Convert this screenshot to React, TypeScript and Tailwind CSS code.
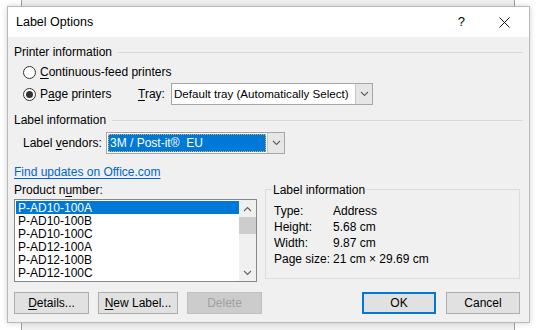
import React from "react";

const font = "font-['Liberation_Sans',Arial,sans-serif]";

function Chevron({ dir = "down" }: { dir?: "down" | "up" }) {
  return (
    <svg width="9" height="6" viewBox="0 0 9 6" className="block">
      {dir === "down" ? (
        <polyline points="1,1 4.5,4.5 8,1" fill="none" stroke="#606060" strokeWidth="1.1" />
      ) : (
        <polyline points="1,5 4.5,1.5 8,5" fill="none" stroke="#606060" strokeWidth="1.1" />
      )}
    </svg>
  );
}

function Radio({ checked }: { checked?: boolean }) {
  return (
    <span className="flex h-[13px] w-[13px] items-center justify-center rounded-full border border-[#333333] bg-white">
      {checked && <span className="h-[7px] w-[7px] rounded-full bg-[#333333]" />}
    </span>
  );
}

function Select({ width, children }: { width: string; children: React.ReactNode }) {
  return (
    <div className={`flex h-[22px] ${width} border border-[#a6a6a6] bg-white`}>
      <div className="flex flex-1 items-center overflow-hidden">{children}</div>
      <div className="flex w-[17px] items-center justify-center border-l border-[#c6c6c6] bg-[#e6e6e6]">
        <Chevron />
      </div>
    </div>
  );
}

function Heading({ children }: { children: React.ReactNode }) {
  return (
    <div className="flex h-[16px] items-center">
      <span className="whitespace-nowrap">{children}</span>
      <div className="ml-[6px] h-px flex-1 bg-[#d9d9d9]" />
    </div>
  );
}

function Button({
  children,
  width,
  disabled,
  primary,
}: {
  children: React.ReactNode;
  width: string;
  disabled?: boolean;
  primary?: boolean;
}) {
  return (
    <div
      className={`flex h-[22px] ${width} items-center justify-center ${
        disabled
          ? "border border-[#bfbfbf] bg-[#cccccc] text-[#a0a0a0]"
          : primary
          ? "border-2 border-[#0078d7] bg-[#e1e1e1]"
          : "border border-[#adadad] bg-[#e1e1e1]"
      }`}
    >
      {children}
    </div>
  );
}

const products = ["P-AD10-100A", "P-AD10-100B", "P-AD10-100C", "P-AD12-100A", "P-AD12-100B", "P-AD12-100C"];

const info = [
  ["Type:", "Address"],
  ["Height:", "5.68 cm"],
  ["Width:", "9.87 cm"],
  ["Page size:", "21 cm × 29.69 cm"],
];

export default function App() {
  return (
    <div className={`relative h-[330px] w-[541px] overflow-hidden bg-white text-[12px] text-black ${font}`}>
      {/* window behind the dialog */}
      <div className="absolute left-[21px] top-[-10px] h-[350px] w-[494px] border-x border-[#a0a0a0] bg-[#f0f0f0]" />

      <div className="relative ml-[7px] mt-[6px] flex h-[317px] w-[523px] flex-col border border-[#b9b9b9] bg-[#f0f0f0] shadow-[0_0_6px_rgba(0,0,0,0.18)]">
        {/* title bar */}
        <div className="flex h-[30px] items-center bg-white pl-[8px]">
          <span className="text-[12.5px]">Label Options</span>
          <span className="ml-auto text-[13px]">?</span>
          <div className="ml-[33px] mr-[19px] flex h-[12px] w-[12px] items-center justify-center">
            <svg width="11" height="11" viewBox="0 0 11 11">
              <path d="M0.5 0.5 L10.5 10.5 M10.5 0.5 L0.5 10.5" stroke="#111" strokeWidth="1" />
            </svg>
          </div>
        </div>

        {/* body */}
        <div className="flex flex-1 flex-col px-[6px] pt-[7px]">
          <Heading>Printer information</Heading>

          <div className="mt-[4px] flex h-[16px] items-center">
            <span className="ml-[9px]">
              <Radio />
            </span>
            <span className="ml-[4px]">
              <span className="underline underline-offset-2">C</span>ontinuous-feed printers
            </span>
          </div>

          <div className="mt-[3px] flex h-[22px] items-center">
            <span className="ml-[9px]">
              <Radio checked />
            </span>
            <span className="ml-[4px] w-[98px]">
              P<span className="underline underline-offset-2">a</span>ge printers
            </span>
            <span className="w-[33px]">
              <span className="underline underline-offset-2">T</span>ray:
            </span>
            <Select width="w-[202px]">
              <span className="pl-[2px] whitespace-nowrap text-[11.6px]">Default tray (Automatically Select)</span>
            </Select>
          </div>

          <div className="mt-[7px]">
            <Heading>Label information</Heading>
          </div>

          <div className="mt-[4px] flex h-[22px] items-center">
            <span className="ml-[9px] w-[83px]">
              Label <span className="underline underline-offset-2">v</span>endors:
            </span>
            <Select width="w-[179px]">
              <div className="m-[1px] flex h-[18px] flex-1 items-center bg-[#0078d7] pl-[2px] text-white outline-1 outline-dotted outline-offset-[-1px] outline-[#e8b060]">
                3M / Post-it®&nbsp;&nbsp;EU
              </div>
            </Select>
          </div>

          <div className="mt-[10px] flex h-[16px] items-center">
            <span className="text-[#0066cc] underline underline-offset-2">Find updates on Office.com</span>
          </div>

          <div className="mt-[2px] flex pr-[3px]">
            {/* product list */}
            <div className="flex w-[243px] flex-col">
              <div className="flex h-[16px] items-center">
                <span>
                  Product n<span className="underline underline-offset-2">u</span>mber:
                </span>
              </div>
              <div className="mt-[1px] flex h-[83px] border border-[#828790] bg-white">
                <div className="flex flex-1 flex-col pl-[1px] pt-[1px]">
                  {products.map((p, i) => (
                    <div
                      key={p}
                      className={`flex h-[13px] items-center pl-[2px] leading-none ${
                        i === 0 ? "bg-[#0078d7] text-white" : ""
                      }`}
                    >
                      {p}
                    </div>
                  ))}
                </div>
                <div className="flex w-[17px] flex-col bg-[#f0f0f0]">
                  <div className="flex h-[17px] items-center justify-center">
                    <Chevron dir="up" />
                  </div>
                  <div className="h-[17px] bg-[#cdcdcd]" />
                  <div className="flex-1" />
                  <div className="flex h-[17px] items-center justify-center">
                    <Chevron />
                  </div>
                </div>
              </div>
            </div>

            {/* label info group */}
            <div className="relative ml-[8px] mt-[7px] h-[90px] flex-1 border border-[#dcdcdc]">
              <span className="absolute left-[6px] top-[-9px] bg-[#f0f0f0] px-[1px]">Label information</span>
              <div className="flex flex-col pl-[8px] pt-[13px]">
                {info.map(([k, v]) => (
                  <div key={k} className="flex h-[16px] items-center">
                    <span className="w-[59px]">{k}</span>
                    <span>{v}</span>
                  </div>
                ))}
              </div>
            </div>
          </div>

          <div className="mt-[10px] flex items-center pr-[3px]">
            <Button width="w-[75px]">
              <span>
                <span className="underline underline-offset-2">D</span>etails...
              </span>
            </Button>
            <div className="ml-[9px]">
              <Button width="w-[80px]">
                <span>
                  <span className="underline underline-offset-2">N</span>ew Label...
                </span>
              </Button>
            </div>
            <div className="ml-[9px]">
              <Button width="w-[75px]" disabled>
                Delete
              </Button>
            </div>
            <div className="ml-auto">
              <Button width="w-[74px]" primary>
                OK
              </Button>
            </div>
            <div className="ml-[10px]">
              <Button width="w-[74px]">Cancel</Button>
            </div>
          </div>
        </div>
      </div>
    </div>
  );
}
